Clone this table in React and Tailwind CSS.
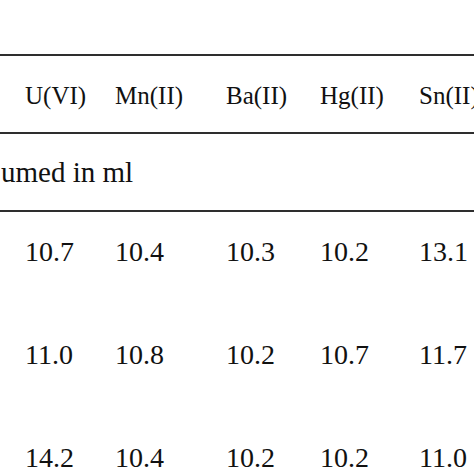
import React from "react";

const metals = ["U(VI)", "Mn(II)", "Ba(II)", "Hg(II)", "Sn(II)"];

const rows = [
  ["10.7", "10.4", "10.3", "10.2", "13.1"],
  ["11.0", "10.8", "10.2", "10.7", "11.7"],
  ["14.2", "10.4", "10.2", "10.2", "11.0"],
];

const cols = "grid grid-cols-[90px_111px_94px_99px_1fr] pl-[25px]";

export default function App() {
  return (
    <div
      className="w-[474px] h-[474px] overflow-hidden bg-white text-[#111] whitespace-nowrap"
      style={{ fontFamily: '"Liberation Serif", "Times New Roman", serif' }}
    >
      <div className="h-[54px]" />
      {/* header */}
      <div className="border-t-2 border-b-2 border-[#2e2e2e] h-[80px] pt-[27px]">
        <div className={`${cols} text-[25px] leading-[25px]`}>
          {metals.map((m) => (
            <div key={m}>{m}</div>
          ))}
        </div>
      </div>
      {/* sub heading */}
      <div className="border-b-2 border-[#2e2e2e] h-[78px] pt-[24px] pl-[1px]">
        <div className="text-[29px] leading-[29px]">umed in ml</div>
      </div>
      {/* values */}
      {rows.map((r, i) => (
        <div key={i} className="h-[103px] pt-[26px]">
          <div className={`${cols} text-[28px] leading-[28px]`}>
            {r.map((v, j) => (
              <div key={j}>{v}</div>
            ))}
          </div>
        </div>
      ))}
    </div>
  );
}
